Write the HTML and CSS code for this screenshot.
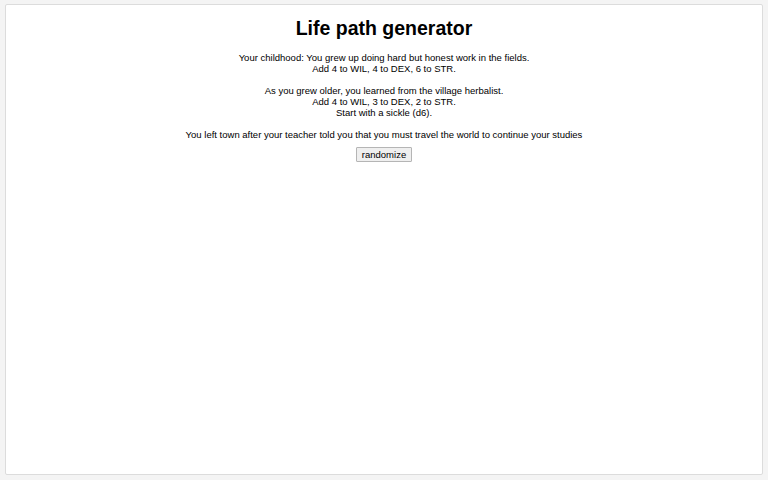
FILE: index.html
```html
<!DOCTYPE html>
<html lang="en">
<head>
  <meta charset="UTF-8" />
  <meta name="viewport" content="width=device-width, initial-scale=1.0" />
  <title>Life path generator</title>
  <link rel="stylesheet" href="styles.css">
</head>
<body>
  <div class="sheet">
    <h1>Life path generator</h1>
    <p id="childhood">
      Your childhood: You grew up doing hard but honest work in the fields.<br />
      Add 4 to WIL, 4 to DEX, 6 to STR.
    </p>
    <p id="youth">
      As you grew older, you learned from the village herbalist.<br />
      Add 4 to WIL, 3 to DEX, 2 to STR.<br />
      Start with a sickle (d6).
    </p>
    <p id="departure">
      You left town after your teacher told you that you must travel the world to continue your studies
    </p>
    <button class="btn" id="randomize">randomize</button>
  </div>
</body>
</html>
```

FILE: styles.css
```css
html, body {
  height: 100%;
}
body {
  font-family: "Liberation Sans", Arial, sans-serif;
  margin: 0;
  padding: 4px 5px 5px 5px;
  box-sizing: border-box;
  background-color: #f4f4f4;
  color: #000;
}
.sheet {
  height: 100%;
  box-sizing: border-box;
  background-color: #fff;
  border: 1px solid #dcdcdc;
  border-radius: 2px;
  text-align: center;
  padding-top: 12px;
}
h1 {
  font-size: 19.5px;
  margin: 0 0 12px 0;
}
p {
  font-size: 9.5px;
  line-height: 11px;
  margin: 0 0 11px 0;
}
#departure {
  margin-bottom: 4px;
}
.btn {
  font-family: "Liberation Sans", Arial, sans-serif;
  font-size: 9.5px;
  padding: 1px 5px;
  background-color: #efefef;
  border: 1px solid #b5b5b5;
  border-radius: 1px;
  color: #000;
}
```
